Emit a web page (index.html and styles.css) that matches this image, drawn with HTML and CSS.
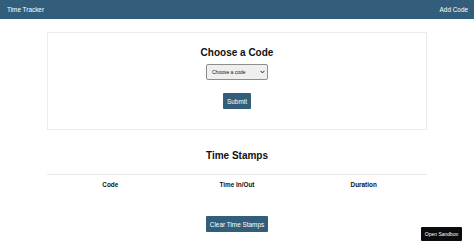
FILE: index.html
```html
<!DOCTYPE html>
<html lang="en">
<head>
<meta charset="utf-8">
<title>Time Tracker</title>
<link rel="stylesheet" href="styles.css">
</head>
<body>
<nav class="navbar">
  <span class="brand">Time Tracker</span>
  <span class="nav-link">Add Code</span>
</nav>
<main class="main">
  <section class="card">
    <h2 class="title">Choose a Code</h2>
    <div class="select-wrap">
      <select class="code-select">
        <option>Choose a code</option>
      </select>
      <svg class="select-arrow" width="5" height="4" viewBox="0 0 5 4"><path d="M0.6 0.9 L2.5 2.9 L4.4 0.9" fill="none" stroke="#222" stroke-width="1"/></svg>
    </div>
    <button class="btn btn-submit">Submit</button>
  </section>
  <section class="stamps">
    <h2 class="title">Time Stamps</h2>
    <hr class="divider">
    <table class="stamp-table">
      <thead>
        <tr><th>Code</th><th>Time In/Out</th><th>Duration</th></tr>
      </thead>
    </table>
    <button class="btn btn-clear">Clear Time Stamps</button>
  </section>
</main>
<div class="sandbox">Open Sandbox</div>
</body>
</html>
```
FILE: styles.css
```css
html, body {
  margin: 0;
  padding: 0;
  background: #ffffff;
  font-family: "Liberation Sans", Arial, sans-serif;
  color: #111;
}
.navbar {
  height: 19px;
  background: #325e7b;
  color: #ffffff;
  display: flex;
  align-items: center;
  justify-content: space-between;
  padding: 0 6px 0 7px;
  font-size: 6.4px;
}
.main {
  width: 380px;
  margin: 0 auto;
}
.card {
  margin-top: 13px;
  border: 1px solid #ececec;
  box-shadow: 0 0 1px rgba(0,0,0,0.04);
  padding: 14px 0 20px;
  display: flex;
  flex-direction: column;
  align-items: center;
}
.title {
  margin: 0;
  font-size: 10px;
  line-height: 12px;
  font-weight: bold;
  text-align: center;
  color: #111;
}
.select-wrap {
  position: relative;
  margin-top: 5px;
  width: 62px;
  height: 16px;
}
.code-select {
  -webkit-appearance: none;
  appearance: none;
  display: block;
  width: 62px;
  height: 16px;
  font-size: 5px;
  font-family: "Liberation Sans", Arial, sans-serif;
  background-color: #efefef;
  border: 1px solid #8e8e8e;
  border-radius: 2px;
  padding: 0 0 0 5px;
  color: #111;
}
.select-arrow {
  position: absolute;
  right: 3px;
  top: 6px;
  pointer-events: none;
}
.btn {
  background: #325e7b;
  color: #ffffff;
  border: none;
  border-radius: 1px;
  font-family: "Liberation Sans", Arial, sans-serif;
  font-size: 6.4px;
  height: 16px;
  padding: 0;
  display: block;
}
.btn-submit {
  margin-top: 13px;
  width: 28px;
}
.stamps {
  margin-top: 20px;
  display: flex;
  flex-direction: column;
  align-items: center;
}
.divider {
  width: 100%;
  margin: 12px 0 0;
  border: none;
  border-top: 1px solid #e8e8e8;
  height: 0;
}
.stamp-table {
  width: 100%;
  border-collapse: collapse;
}
.stamp-table th {
  font-size: 6.4px;
  font-weight: bold;
  color: #111;
  padding: 6px 0 0;
  line-height: 8px;
  width: 33.33%;
  text-align: center;
}
.btn-clear {
  margin-top: 27px;
  width: 62px;
}
.sandbox {
  position: fixed;
  right: 12px;
  bottom: 7px;
  width: 41px;
  height: 14px;
  background: #0b0b0b;
  color: #ffffff;
  font-size: 5px;
  border-radius: 1px;
  display: flex;
  align-items: center;
  justify-content: center;
}
```
